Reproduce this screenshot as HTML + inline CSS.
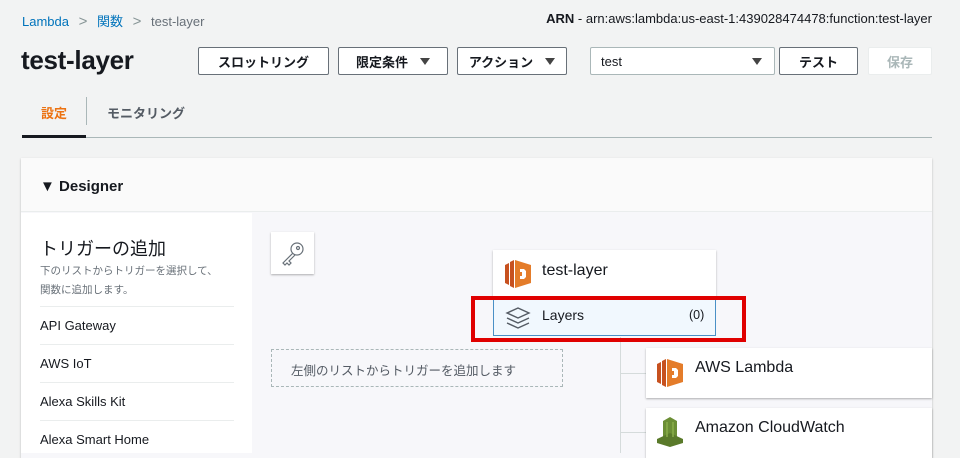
<!DOCTYPE html>
<html><head><meta charset="utf-8"><style>
*{box-sizing:border-box;margin:0;padding:0}
body{width:960px;height:453px;overflow:hidden;background:#f2f3f3;font-family:"Liberation Sans","Noto Sans CJK JP",sans-serif;color:#16191f;position:relative}
.a{position:absolute}
.btn{position:absolute;top:47px;height:28px;border:1px solid #687078;background:#fff;border-radius:2px;font-size:13px;font-weight:bold;display:flex;align-items:center;justify-content:center;color:#16191f}
.tri{display:inline-block;width:0;height:0;border-left:5px solid transparent;border-right:5px solid transparent;border-top:7px solid #444;margin-left:12px}
.li{position:absolute;left:40px;width:194px;font-size:13px;border-top:1px solid #eaeded;height:38px;padding-top:11px}
.card{position:absolute;background:#fff;box-shadow:0 1px 2px rgba(0,0,0,.3)}
</style></head><body>
<div class="a" style="left:22px;top:11px;font-size:13px;color:#0073bb">Lambda <span style="color:#879596;margin:0 6px;font-size:15px">&gt;</span> 関数 <span style="color:#879596;margin:0 6px;font-size:15px">&gt;</span> <span style="color:#687078">test-layer</span></div>
<div class="a" style="right:28px;top:11px;font-size:13px"><b>ARN</b> - arn:aws:lambda:us-east-1:439028474478:function:test-layer</div>
<div class="a" style="left:21px;top:45px;font-size:26px;font-weight:bold;letter-spacing:-0.3px">test-layer</div>
<div class="btn" style="left:198px;width:131px">スロットリング</div>
<div class="btn" style="left:338px;width:110px">限定条件<span class="tri"></span></div>
<div class="btn" style="left:457px;width:110px">アクション<span class="tri"></span></div>
<div class="btn" style="left:590px;width:185px;justify-content:space-between;padding:0 12px 0 10px;font-weight:normal;border-color:#aab7b8">test<span class="tri"></span></div>
<div class="btn" style="left:779px;width:79px">テスト</div>
<div class="btn" style="left:868px;width:64px;border-color:#eaeded;color:#aab7b8">保存</div>
<div class="a" style="left:41px;top:103px;font-size:13px;font-weight:bold;color:#ec7211">設定</div>
<div class="a" style="left:86px;top:97px;width:1px;height:28px;background:#aab7b8"></div>
<div class="a" style="left:107px;top:103px;font-size:13px;font-weight:bold;color:#545b64">モニタリング</div>
<div class="a" style="left:22px;top:137px;width:910px;height:1px;background:#aab7b8"></div>
<div class="a" style="left:22px;top:135px;width:64px;height:3px;background:#16191f"></div>
<div class="a" style="left:21px;top:158px;width:911px;height:300px;background:#f7f7fa;box-shadow:0 1px 2px rgba(0,0,0,.25)"></div>
<div class="a" style="left:21px;top:158px;width:911px;height:54px;background:#fafafa;border-bottom:1px solid #eaeded"></div>
<div class="a" style="left:40px;top:178px;font-size:15px;font-weight:bold">▼ Designer</div>
<div class="a" style="left:21px;top:213px;width:231px;height:240px;background:#fff"></div>
<div class="a" style="left:40px;top:235px;font-size:18px">トリガーの追加</div>
<div class="a" style="left:40px;top:262px;font-size:10.5px;color:#687078;line-height:19px">下のリストからトリガーを選択して、<br>関数に追加します。</div>
<div class="li" style="top:306px">API Gateway</div>
<div class="li" style="top:344px">AWS IoT</div>
<div class="li" style="top:382px">Alexa Skills Kit</div>
<div class="li" style="top:420px">Alexa Smart Home</div>
<div class="card" style="left:271px;top:232px;width:43px;height:42px"><svg width="43" height="42" viewBox="0 0 43 42"><g fill="none" stroke="#687078" stroke-width="1.2"><circle cx="26" cy="17" r="6"/><circle cx="27" cy="16" r="1.5"/><path d="M22 21 L12 31 L14 33 L16 31 L18 33 L20 31 L18 29 L24 23"/></g></svg></div>
<div class="a" style="left:271px;top:349px;width:292px;height:38px;border:1px dashed #aab7b8;font-size:12.5px;color:#545b64;padding:10px 0 0 19px">左側のリストからトリガーを追加します</div>
<div class="a" style="left:620px;top:337px;width:1px;height:116px;background:#d5dbdb"></div>
<div class="a" style="left:620px;top:373px;width:26px;height:1px;background:#d5dbdb"></div>
<div class="a" style="left:620px;top:432px;width:26px;height:1px;background:#d5dbdb"></div>
<div class="card" style="left:493px;top:250px;width:223px;height:48px"></div>
<svg class="a" style="left:505px;top:259px" width="26" height="30" viewBox="0 0 26 30"><path d="M0 6 L4 4 V26 L0 24Z M5 3 L9 1 V29 L5 27Z" fill="#c7511f"/><path d="M10 1 L26 6 V24 L10 29Z" fill="#e47c2a"/><path d="M15 10 H19 L21 12 V18 L19 20 H15 V17 H17 V13 H15Z" fill="#fff"/></svg>
<div class="a" style="left:542px;top:262px;font-size:16px">test-layer</div>
<div class="a" style="left:493px;top:298px;width:223px;height:38px;background:#f1f8fe;border:1px solid #4a90c6"></div>
<svg class="a" style="left:505px;top:305px" width="26" height="26" viewBox="0 0 26 26"><g fill="none" stroke="#545b64" stroke-width="1.4"><path d="M2 8 L13 3 L24 8 L13 13Z"/><path d="M2 13 L13 18 L24 13"/><path d="M2 18 L13 23 L24 18"/></g></svg>
<div class="a" style="left:542px;top:307px;font-size:14px">Layers</div>
<div class="a" style="left:689px;top:308px;font-size:12.5px">(0)</div>
<div class="a" style="left:471px;top:296px;width:275px;height:46px;border:4px solid #e00000"></div>
<div class="card" style="left:646px;top:348px;width:286px;height:50px"></div>
<svg class="a" style="left:657px;top:358px" width="26" height="30" viewBox="0 0 26 30"><path d="M0 6 L4 4 V26 L0 24Z M5 3 L9 1 V29 L5 27Z" fill="#c7511f"/><path d="M10 1 L26 6 V24 L10 29Z" fill="#e47c2a"/><path d="M15 10 H19 L21 12 V18 L19 20 H15 V17 H17 V13 H15Z" fill="#fff"/></svg>
<div class="a" style="left:695px;top:359px;font-size:16px">AWS Lambda</div>
<div class="card" style="left:646px;top:408px;width:286px;height:50px"></div>
<svg class="a" style="left:657px;top:417px" width="26" height="30" viewBox="0 0 26 30"><path d="M6 4 L13 0 L20 4 V22 L13 25 L6 22Z" fill="#6b8e34"/><path d="M0 22 L13 16 L26 22 V26 L13 30 L0 26Z" fill="#5a7a2a"/><path d="M10 5 V20 M16 5 V20" stroke="#8aae4a" stroke-width="1.5"/></svg>
<div class="a" style="left:695px;top:419px;font-size:16px">Amazon CloudWatch</div>
</body></html>
